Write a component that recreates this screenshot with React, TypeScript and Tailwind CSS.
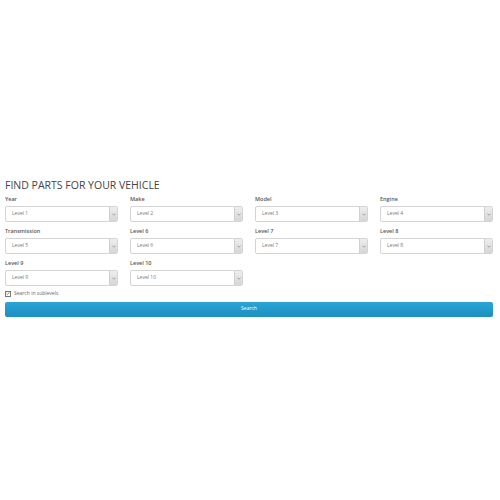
import React from "react";

const fields = [
  ["Year", "Level 1"],
  ["Make", "Level 2"],
  ["Model", "Level 3"],
  ["Engine", "Level 4"],
  ["Transmission", "Level 5"],
  ["Level 6", "Level 6"],
  ["Level 7", "Level 7"],
  ["Level 8", "Level 8"],
  ["Level 9", "Level 9"],
  ["Level 10", "Level 10"],
];

function Select({ value }: { value: string }) {
  return (
    <div className="flex h-[16px] items-stretch rounded-[2px] border border-[#d5d5d5] bg-white">
      <div className="flex flex-1 items-center pl-[6px] text-[5px] text-[#777]">{value}</div>
      <div className="flex w-[8px] items-center justify-center rounded-r-[1px] border-l border-[#d0d0d0] bg-gradient-to-b from-[#eeeeee] to-[#d6d6d6]">
        <svg width="4" height="3" viewBox="0 0 4 3">
          <path d="M0.5 0.8 L2 2.2 L3.5 0.8" stroke="#777" strokeWidth="0.6" fill="none" />
        </svg>
      </div>
    </div>
  );
}

export default function App() {
  return (
    <div className="h-[500px] w-[500px] bg-white font-['Open_Sans',sans-serif]">
      <div className="pl-[5px] pr-[7px] pt-[179px]">
        <div className="text-[10.5px] uppercase leading-[12px] text-[#444]">Find parts for your vehicle</div>
        <div className="mt-[3px] grid grid-cols-4 gap-x-[12px]">
          {fields.map(([label, value]) => (
            <div key={label} className="flex flex-col">
              <div className="h-[10px] text-[5.5px] font-semibold leading-[10px] text-[#555]">{label}</div>
              <div className="mt-[2px] mb-[4px]">
                <Select value={value} />
              </div>
            </div>
          ))}
        </div>
        <div className="flex items-center gap-[3px]">
          <div className="flex h-[6px] w-[6px] items-center justify-center border border-[#777] bg-white">
            <svg width="5" height="5" viewBox="0 0 5 5">
              <path d="M0.8 2.5 L2 3.7 L4.2 1" stroke="#333" strokeWidth="0.7" fill="none" />
            </svg>
          </div>
          <span className="text-[5px] text-[#666]">Search in sublevels</span>
        </div>
        <div className="mt-[4px] flex h-[15px] items-center justify-center rounded-[2px] bg-gradient-to-b from-[#2aa5d6] to-[#1b8fc0] text-[5px] text-white">
          Search
        </div>
      </div>
    </div>
  );
}
